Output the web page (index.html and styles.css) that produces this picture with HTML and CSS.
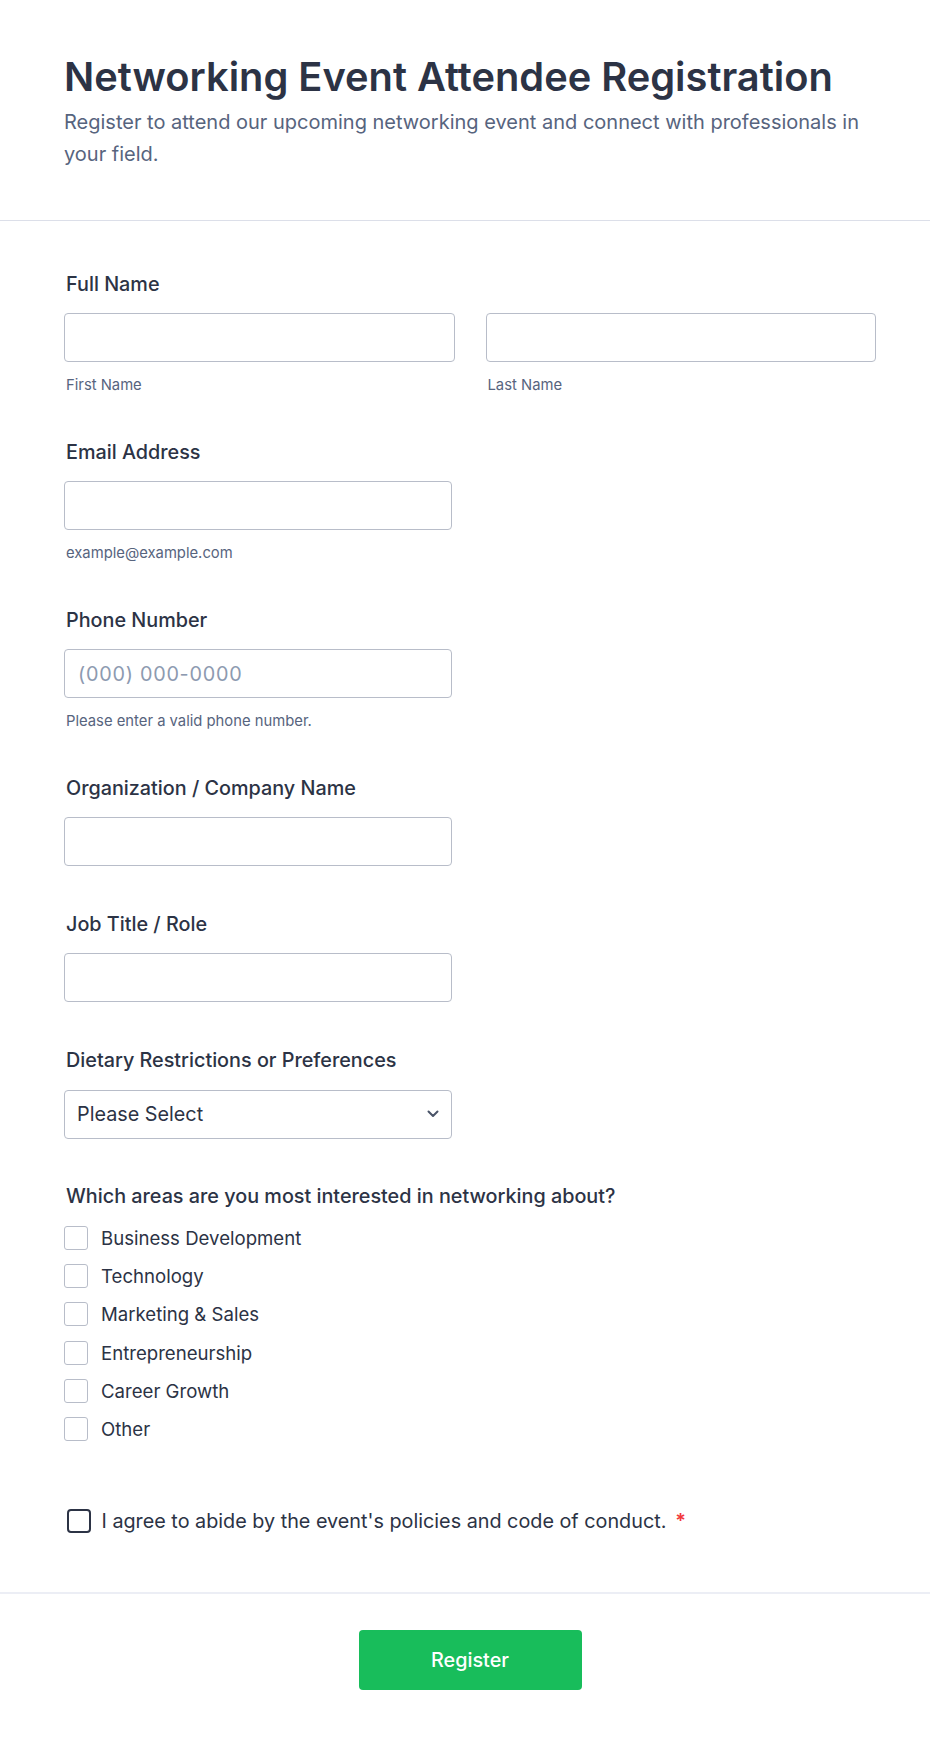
FILE: index.html
```html
<!DOCTYPE html>
<html lang="en">
<head>
    <meta charset="UTF-8">
    <meta name="viewport" content="width=device-width, initial-scale=1.0">
    <title>Networking Event Attendee Registration</title>
    <link rel="stylesheet" href="styles.css">
</head>
<body>
    <form class="form">
        <div class="form-header">
            <h1>Networking Event Attendee Registration</h1>
            <p>Register to attend our upcoming networking event and connect with professionals in your field.</p>
        </div>

        <div class="form-body">
            <div class="field">
                <label class="field-label">Full Name</label>
                <div class="name-row">
                    <div>
                        <input type="text" class="input">
                        <span class="sublabel">First Name</span>
                    </div>
                    <div>
                        <input type="text" class="input">
                        <span class="sublabel">Last Name</span>
                    </div>
                </div>
            </div>

            <div class="field">
                <label class="field-label">Email Address</label>
                <input type="email" class="input input-half">
                <span class="sublabel">example@example.com</span>
            </div>

            <div class="field">
                <label class="field-label">Phone Number</label>
                <input type="tel" class="input input-half" placeholder="(000) 000-0000">
                <span class="sublabel">Please enter a valid phone number.</span>
            </div>

            <div class="field">
                <label class="field-label">Organization / Company Name</label>
                <input type="text" class="input input-half">
            </div>

            <div class="field">
                <label class="field-label">Job Title / Role</label>
                <input type="text" class="input input-half">
            </div>

            <div class="field">
                <label class="field-label">Dietary Restrictions or Preferences</label>
                <div class="select-wrap">
                    <select class="input select">
                        <option>Please Select</option>
                        <option>Vegetarian</option>
                        <option>Vegan</option>
                        <option>Gluten-free</option>
                        <option>None</option>
                    </select>
                    <svg class="chevron" width="12" height="8" viewBox="0 0 12 8">
                        <path d="M1.5 1.5 L6 6 L10.5 1.5" fill="none" stroke="#4a5468" stroke-width="2" stroke-linecap="round" stroke-linejoin="round" />
                    </svg>
                </div>
            </div>

            <div class="field">
                <label class="field-label">Which areas are you most interested in networking about?</label>
                <div class="options">
                    <label class="option"><input type="checkbox"> Business Development</label>
                    <label class="option"><input type="checkbox"> Technology</label>
                    <label class="option"><input type="checkbox"> Marketing &amp; Sales</label>
                    <label class="option"><input type="checkbox"> Entrepreneurship</label>
                    <label class="option"><input type="checkbox"> Career Growth</label>
                    <label class="option"><input type="checkbox"> Other</label>
                </div>
            </div>

            <label class="agree">
                <input type="checkbox">
                I agree to abide by the event's policies and code of conduct.
                <span class="required">*</span>
            </label>
        </div>

        <div class="form-footer">
            <button type="submit" class="submit">Register</button>
        </div>
    </form>
</body>
</html>
```

FILE: styles.css
```css
body {
    margin: 0;
    background-color: #fff;
    font-family: Inter, 'Liberation Sans', sans-serif;
    color: #2c3345;
}

.form-header {
    padding: 53px 54px 50px 64px;
    border-bottom: 1px solid #dcdfe9;
}

.form-header h1 {
    margin: 0;
    font-size: 39.8px;
    line-height: 48px;
    font-weight: 600;
    color: #2c3345;
}

.form-header p {
    margin: 5px 0 0;
    font-size: 20px;
    line-height: 32px;
    color: #57647e;
}

.form-body {
    padding: 50.5px 54px 59px 64px;
}

.field {
    margin-bottom: 45.5px;
}

.field-label {
    display: block;
    padding-left: 2px;
    margin-bottom: 17.6px;
    font-size: 19.8px;
    line-height: 24px;
    font-weight: 500;
}

.name-row {
    display: grid;
    grid-template-columns: 1fr 1fr;
    gap: 31px;
}

.input {
    display: block;
    box-sizing: border-box;
    width: 100%;
    height: 49px;
    padding: 0 13px;
    border: 1px solid #b8bdc9;
    border-radius: 4px;
    background-color: #fff;
    font-family: inherit;
    font-size: 19.8px;
    color: #2c3345;
    outline: none;
}

.input::placeholder {
    color: #8d9ab0;
    letter-spacing: 0.75px;
}

.input-half {
    width: 387.5px;
}

.sublabel {
    display: block;
    margin-top: 15px;
    padding-left: 2px;
    font-size: 14.8px;
    line-height: 17px;
    color: #57647e;
}

.select-wrap {
    position: relative;
    width: 387.5px;
}

.select {
    appearance: none;
    -webkit-appearance: none;
    padding-left: 12px;
}

.chevron {
    position: absolute;
    right: 13px;
    top: 20px;
    pointer-events: none;
}

.options {
    display: flex;
    flex-direction: column;
    gap: 14.3px;
    margin-top: 2.7px;
}

.option {
    display: flex;
    align-items: center;
    gap: 13px;
    font-size: 18.6px;
    line-height: 24px;
}

.option input,
.agree input {
    appearance: none;
    -webkit-appearance: none;
    flex: none;
    box-sizing: border-box;
    width: 24px;
    height: 24px;
    margin: 0;
    border: 1px solid #b8bdc9;
    border-radius: 3px;
    background-color: #fff;
}

.agree {
    display: flex;
    align-items: center;
    padding: 22px 0 0 2.5px;
    font-size: 19.8px;
    line-height: 24px;
}

.agree input {
    margin-right: 11px;
    border: 2px solid #2c3345;
    border-radius: 4px;
}

.required {
    align-self: flex-start;
    margin-left: 9px;
    color: #f23a3c;
    font-weight: 600;
}

.form-footer {
    display: flex;
    justify-content: center;
    padding: 36.5px 54px 50px 64px;
    border-top: 2px solid #eceef5;
}

.submit {
    width: 223px;
    height: 59.7px;
    border: none;
    border-radius: 4px;
    background-color: #18bd5b;
    color: #fff;
    font-family: inherit;
    font-size: 19.8px;
    font-weight: 500;
    cursor: pointer;
}
```
